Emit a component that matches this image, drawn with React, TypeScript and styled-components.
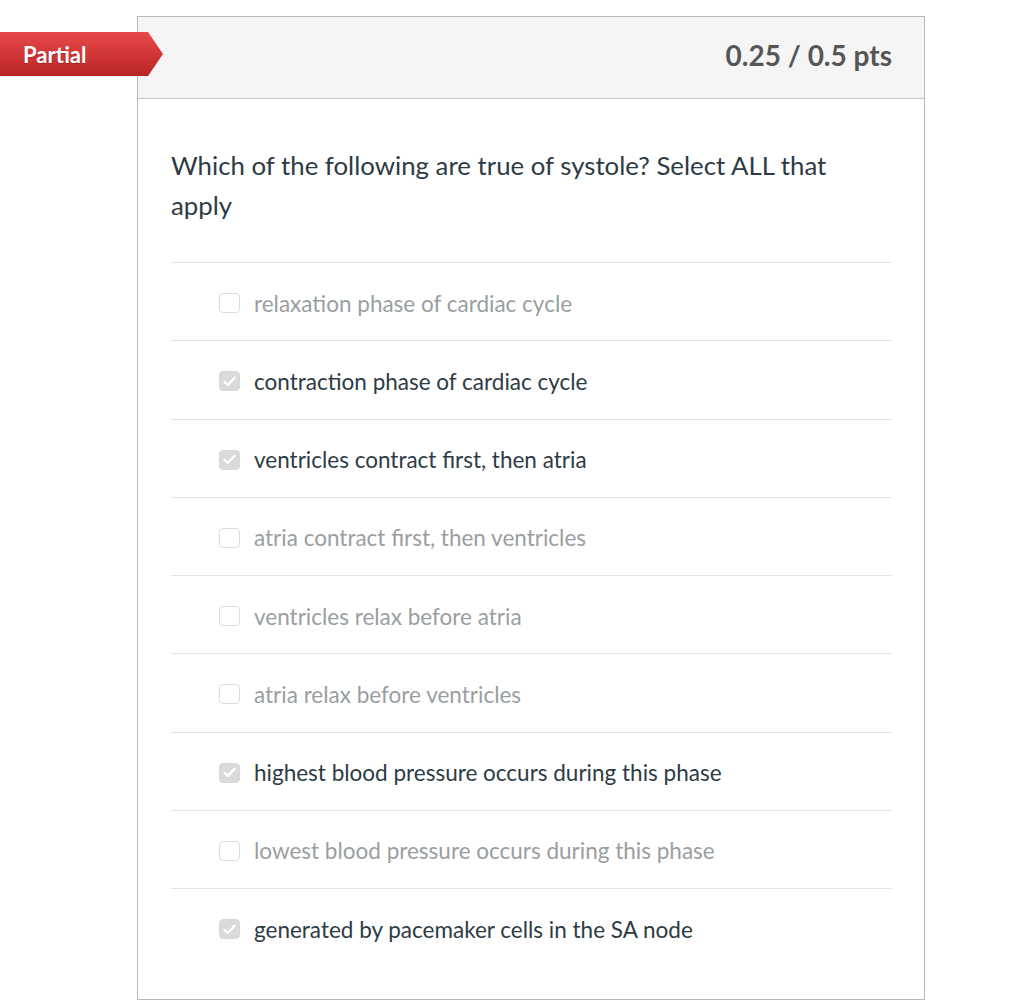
import styled, { createGlobalStyle } from 'styled-components'

const GlobalStyle = createGlobalStyle`
  body {
    margin: 0;
    background: #fff;
    font-family: Lato, "Open Sans", sans-serif;
  }
`

const Page = styled.div`
  position: relative;
  padding: 16px 0 6px 137px;
`

const Badge = styled.div`
  position: absolute;
  left: 0;
  top: 32px;
  width: 163px;
  height: 44px;
  box-sizing: border-box;
  padding-left: 23px;
  display: flex;
  align-items: center;
  color: #fff;
  font-weight: 700;
  font-size: 22px;
  background: linear-gradient(#e8494a, #b82526);
  clip-path: polygon(0 0, 148px 0, 163px 50%, 148px 100%, 0 100%);
  text-shadow: 0 1px 1px rgba(0, 0, 0, 0.2);
`

const Card = styled.div`
  width: 788px;
  box-sizing: border-box;
  border: 1px solid #b9b9b9;
`

const Header = styled.div`
  height: 82px;
  background: #f5f5f5;
  border-bottom: 1px solid #c4c4c4;
  display: flex;
  align-items: center;
  justify-content: flex-end;
  padding: 0 32px;
  box-sizing: border-box;
`

const Points = styled.div`
  font-size: 28px;
  font-weight: 700;
  color: #555;
  padding-bottom: 6px;
`

const Body = styled.div`
  padding: 46px 32px 33px 33px;
`

const Question = styled.div`
  font-size: 25.8px;
  line-height: 40px;
  color: #2d3b45;
  max-width: 690px;
  margin-bottom: 37px;
`

const Answer = styled.div`
  height: 78.25px;
  box-sizing: border-box;
  border-top: 1px solid #e3e3e3;
  display: flex;
  align-items: center;
  padding-left: 48px;
  padding-top: 3px;
`

const Box = styled.span<{ $checked: boolean }>`
  width: 21px;
  height: 20px;
  flex-shrink: 0;
  box-sizing: border-box;
  border-radius: 4px;
  border: 1px solid ${p => (p.$checked ? '#d8d8d8' : '#dcdcdc')};
  background: ${p => (p.$checked ? '#dadada' : '#fff')};
  margin-right: 14px;
  display: flex;
  align-items: center;
  justify-content: center;
`

const Label = styled.span<{ $checked: boolean }>`
  font-size: 22.5px;
  color: ${p => (p.$checked ? '#2d3b45' : '#999ea2')};
`

const answers = [
  { text: 'relaxation phase of cardiac cycle', checked: false },
  { text: 'contraction phase of cardiac cycle', checked: true },
  { text: 'ventricles contract first, then atria', checked: true },
  { text: 'atria contract first, then ventricles', checked: false },
  { text: 'ventricles relax before atria', checked: false },
  { text: 'atria relax before ventricles', checked: false },
  { text: 'highest blood pressure occurs during this phase', checked: true },
  { text: 'lowest blood pressure occurs during this phase', checked: false },
  { text: 'generated by pacemaker cells in the SA node', checked: true },
]

export default function App() {
  return (
    <Page>
      <GlobalStyle />
      <Badge>Partial</Badge>
      <Card>
        <Header>
          <Points>0.25 / 0.5 pts</Points>
        </Header>
        <Body>
          <Question>Which of the following are true of systole? Select ALL that apply</Question>
          {answers.map(a => (
            <Answer key={a.text}>
              <Box $checked={a.checked}>
                {a.checked && (
                  <svg width="13" height="11" viewBox="0 0 13 11">
                    <path d="M1.5 5.8 L4.8 9 L11.5 1.8" fill="none" stroke="#fff" strokeWidth="2.4" strokeLinecap="round" strokeLinejoin="round" />
                  </svg>
                )}
              </Box>
              <Label $checked={a.checked}>{a.text}</Label>
            </Answer>
          ))}
        </Body>
      </Card>
    </Page>
  )
}
